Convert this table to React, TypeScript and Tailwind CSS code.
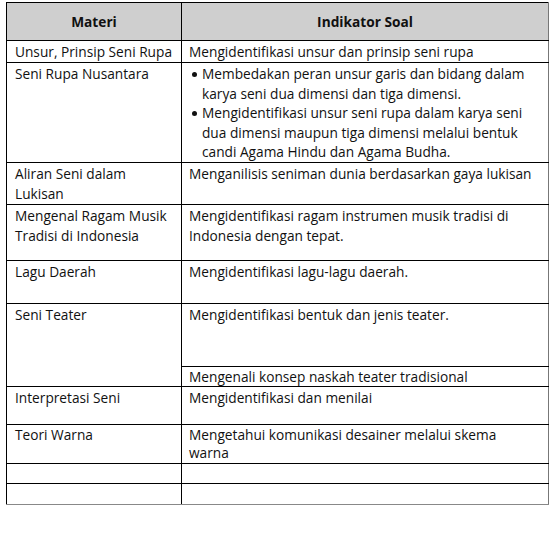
import React from "react";

const td = "border border-black align-top px-[8px] pt-[1px] text-left whitespace-nowrap";
const td2 = "border border-black border-r-[#777] align-top pl-[7px] pr-[4px] pt-[1px] text-left whitespace-nowrap";

function Bullet({ children }: { children: React.ReactNode }) {
  return (
    <div className="flex">
      <span className="w-[13px] shrink-0 flex items-start pt-[8px] pl-[3px]">
        <span className="block w-[5px] h-[5px] rounded-full bg-[#111]" />
      </span>
      <span>{children}</span>
    </div>
  );
}

export default function App() {
  return (
    <div
      className="w-[550px] h-[533px] bg-white overflow-hidden pt-[2px] pl-[6px]"
      style={{ fontFamily: "'Open Sans', 'Noto Sans', sans-serif" }}
    >
      <table className="border-collapse table-fixed text-[13.7px] leading-[20px] text-[#111]">
        <colgroup>
          <col className="w-[175px]" />
          <col className="w-[367px]" />
        </colgroup>
        <tbody>
          <tr className="h-[38px] bg-[#cfcfcf]">
            <td className="border border-black text-center font-bold align-middle">Materi</td>
            <td className="border border-black border-r-[#777] text-center font-bold align-middle">Indikator Soal</td>
          </tr>
          <tr className="h-[22px]">
            <td className={td}>Unsur, Prinsip Seni Rupa</td>
            <td className={td2}>Mengidentifikasi unsur dan prinsip seni rupa</td>
          </tr>
          <tr className="h-[99px]">
            <td className={td}>Seni Rupa Nusantara</td>
            <td className={td2 + " leading-[19.6px] pt-0"}>
              <Bullet>Membedakan peran unsur garis dan bidang dalam<br />karya seni dua dimensi dan tiga dimensi.</Bullet>
              <Bullet>Mengidentifikasi unsur seni rupa dalam karya seni<br />dua dimensi maupun tiga dimensi melalui bentuk<br />candi Agama Hindu dan Agama Budha.</Bullet>
            </td>
          </tr>
          <tr className="h-[40px]">
            <td className={td}>Aliran Seni dalam<br />Lukisan</td>
            <td className={td2}>Menganilisis seniman dunia berdasarkan gaya lukisan</td>
          </tr>
          <tr className="h-[56px]">
            <td className={td}>Mengenal Ragam Musik<br />Tradisi di Indonesia</td>
            <td className={td2}>Mengidentifikasi ragam instrumen musik tradisi di<br />Indonesia dengan tepat.</td>
          </tr>
          <tr className="h-[43px]">
            <td className={td}>Lagu Daerah</td>
            <td className={td2}>Mengidentifikasi lagu-lagu daerah.</td>
          </tr>
          <tr className="h-[63px]">
            <td className={td} rowSpan={2}>Seni Teater</td>
            <td className={td2}>Mengidentifikasi bentuk dan jenis teater.</td>
          </tr>
          <tr className="h-[19px]">
            <td className={td2 + " pt-0 leading-[18px]"}>Mengenali konsep naskah teater tradisional</td>
          </tr>
          <tr className="h-[38px]">
            <td className={td}>Interpretasi Seni</td>
            <td className={td2}>Mengidentifikasi dan menilai</td>
          </tr>
          <tr className="h-[38px]">
            <td className={td + " leading-[18.5px] pt-[1px]"}>Teori Warna</td>
            <td className={td2 + " leading-[18.5px] pt-[1px]"}>Mengetahui komunikasi desainer melalui skema<br />warna</td>
          </tr>
          <tr className="h-[20px]">
            <td className={td}></td>
            <td className={td2}></td>
          </tr>
          <tr className="h-[21px]">
            <td className="border border-black border-b-[#888] align-top"></td>
            <td className="border border-black border-b-[#888] border-r-[#777] align-top"></td>
          </tr>
        </tbody>
      </table>
    </div>
  );
}
